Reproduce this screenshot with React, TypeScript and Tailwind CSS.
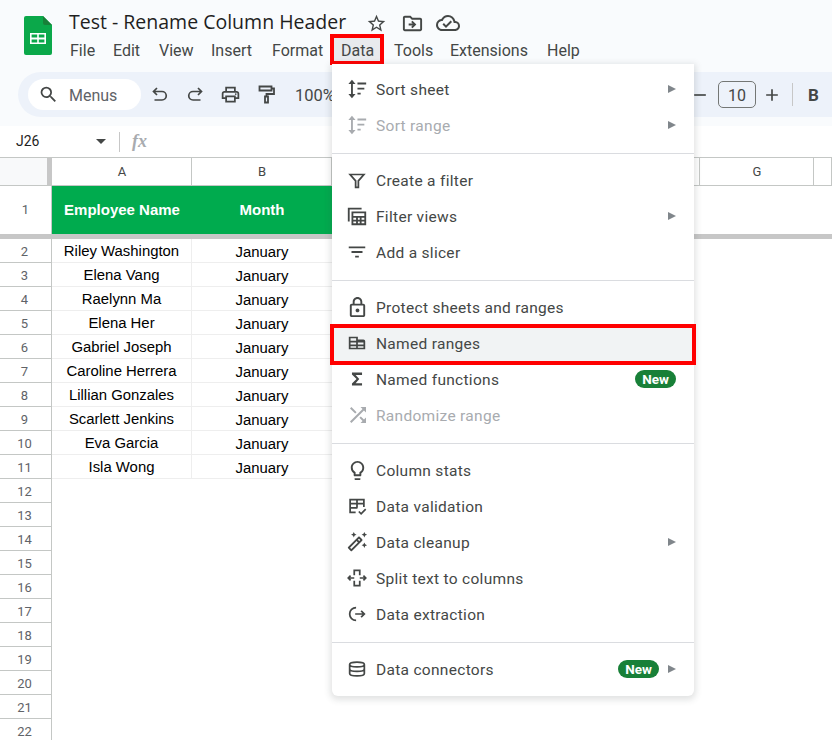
import type { ReactNode } from 'react';
import {
  MdAdd,
  MdOutlineAutoFixHigh,
  MdOutlineCloudDone,
  MdOutlineDriveFileMove,
  MdOutlineLightbulb,
  MdOutlineLocalPrintshop,
  MdOutlineLock,
  MdRemove,
  MdSearch,
  MdShuffle,
  MdStarBorder,
} from 'react-icons/md';

const names = [
  'Riley Washington',
  'Elena Vang',
  'Raelynn Ma',
  'Elena Her',
  'Gabriel Joseph',
  'Caroline Herrera',
  'Lillian Gonzales',
  'Scarlett Jenkins',
  'Eva Garcia',
  'Isla Wong',
];

const menuBar = [
  { label: 'File', cls: 'w-[43px]' },
  { label: 'Edit', cls: 'w-[46px]' },
  { label: 'View', cls: 'w-[52px]' },
  { label: 'Insert', cls: 'w-[61px]' },
  { label: 'Format', cls: 'w-[69px]' },
  { label: 'Data', cls: 'w-[53px]' },
  { label: 'Tools', cls: 'w-[56px]' },
  { label: 'Extensions', cls: 'w-[97px]' },
  { label: 'Help', cls: 'w-[40px]' },
];

function Svg({ children }: { children: ReactNode }) {
  return (
    <svg viewBox="0 0 24 24" className="h-[22px] w-[22px]" fill="currentColor">
      {children}
    </svg>
  );
}

function Line({ children }: { children: ReactNode }) {
  return (
    <svg viewBox="0 0 24 24" className="h-[22px] w-[22px]" fill="none" stroke="currentColor" strokeWidth="1.9">
      {children}
    </svg>
  );
}

const SortIcon = () => (
  <Svg>
    <path d="M6.500 2 2.600 6.600h2.900v10.800H2.600L6.500 22l3.900-4.600H7.500V6.600h2.900z" />
    <path d="M12.500 5h9.500v2h-9.500zM12.500 10.500h7.500v2h-7.500zM12.500 16h3.500v2h-3.500z" />
  </Svg>
);
const FilterIcon = () => (
  <Line>
    <path d="M4.500 6h15l-6 7v7h-3v-7z" />
  </Line>
);
const FilterViewsIcon = () => (
  <Svg>
    <path d="M2 3h15v2H4v13H2z" />
    <path d="M6 7h16v15H6zm2 2v3h12V9zm0 5v2h3v-2zm5 0v2h2v-2zm4 0v2h3v-2zm-9 4v2h3v-2zm5 0v2h2v-2zm4 0v2h3v-2z" fillRule="evenodd" />
  </Svg>
);
const SlicerIcon = () => (
  <Svg>
    <path d="M3 6h18v2H3zM6 11h12v2H6zM10 16h4v2h-4z" />
  </Svg>
);
const NamedRangesIcon = () => (
  <Line>
    <path d="M4 6h8v3h7a1 1 0 0 1 1 1v8H4zM4 10.500h16M4 14.500h16M12 6v12" />
  </Line>
);
const SigmaIcon = () => (
  <Svg>
    <path d="M6.500 5h11v2.500h-7l4 4.500-4 4.500h7V19h-11v-2l5-5-5-5z" />
  </Svg>
);
const ValidationIcon = () => (
  <Line>
    <path d="M10.500 19H4.500V5h15v8M4.500 9.500h15M12 5v9M4.500 14h8" />
    <path d="m14 18 2.500 2.500 5-5" />
  </Line>
);
const SplitIcon = () => (
  <Line>
    <path d="M9 9V3.800h6V9M9 15v5.200h6V15M9 12H2.500M5 9.500 2.500 12 5 14.500M15 12h6.500M19 9.500l2.500 2.500-2.500 2.500" />
  </Line>
);
const ExtractIcon = () => (
  <Line>
    <path d="M11 5a7 7 0 0 0 0 14M10 12h10M16.500 8.500 20 12l-3.500 3.500" />
  </Line>
);
const DatabaseIcon = () => (
  <Line>
    <path d="M4 7c0-3.500 16-3.500 16 0v10c0 3.500-16 3.500-16 0zM4 7c0 3.500 16 3.500 16 0M4 12c0 3.500 16 3.500 16 0" />
  </Line>
);

type Item = {
  label: string;
  icon: ReactNode;
  disabled?: boolean;
  arrow?: boolean;
  badge?: boolean;
  hl?: boolean;
};

const groups: Item[][] = [
  [
    { label: 'Sort sheet', icon: <SortIcon />, arrow: true },
    { label: 'Sort range', icon: <SortIcon />, arrow: true, disabled: true },
  ],
  [
    { label: 'Create a filter', icon: <FilterIcon /> },
    { label: 'Filter views', icon: <FilterViewsIcon />, arrow: true },
    { label: 'Add a slicer', icon: <SlicerIcon /> },
  ],
  [
    { label: 'Protect sheets and ranges', icon: <MdOutlineLock size={23} /> },
    { label: 'Named ranges', icon: <NamedRangesIcon />, hl: true },
    { label: 'Named functions', icon: <SigmaIcon />, badge: true },
    { label: 'Randomize range', icon: <MdShuffle size={24} />, disabled: true },
  ],
  [
    { label: 'Column stats', icon: <MdOutlineLightbulb size={23} /> },
    { label: 'Data validation', icon: <ValidationIcon /> },
    { label: 'Data cleanup', icon: <MdOutlineAutoFixHigh size={22} />, arrow: true },
    { label: 'Split text to columns', icon: <SplitIcon /> },
    { label: 'Data extraction', icon: <ExtractIcon /> },
  ],
  [{ label: 'Data connectors', icon: <DatabaseIcon />, arrow: true, badge: true }],
];

function Arrow() {
  return (
    <svg viewBox="0 0 8 8" className="h-2 w-2 text-[#80868b]" fill="currentColor">
      <path d="M0 0l8 4-8 4z" />
    </svg>
  );
}

function MenuRow({ item }: { item: Item }) {
  return (
    <div
      className={`relative flex h-9 items-center pl-[14px] pr-[18px] text-[15.5px] tracking-[0.3px] ${
        item.disabled ? 'text-[#a8abaf]' : 'text-[#444746]'
      } ${item.hl ? 'bg-[#f1f3f4]' : ''}`}
    >
      {item.hl && <div className="absolute -left-[2px] -right-[2px] -top-[1px] -bottom-[4px] border-4 border-[#ff0000]" />}
      <span className="flex w-[30px] items-center">{item.icon}</span>
      <span className="flex-1 pt-[3px]">{item.label}</span>
      {item.badge && (
        <span className="flex h-[18px] w-[41px] items-center justify-center rounded-full bg-[#188038] text-[13.5px] font-bold tracking-normal text-white">
          New
        </span>
      )}
      {item.arrow && (
        <span className="ml-[9px]">
          <Arrow />
        </span>
      )}
    </div>
  );
}

function DataMenu() {
  return (
    <div className="absolute left-[332px] top-[64px] w-[362px] rounded-b-md bg-white pb-[9px] pt-[7px] font-['Roboto',sans-serif] shadow-[0_2px_6px_2px_rgba(60,64,67,0.15)]">
      {groups.map((group, i) => (
        <div key={i}>
          {i > 0 && <div className="mb-2 mt-[10px] h-px bg-[#dadce0]" />}
          {group.map((item) => (
            <MenuRow key={item.label} item={item} />
          ))}
        </div>
      ))}
    </div>
  );
}

function Toolbar() {
  return (
    <div className="ml-[18px] flex h-[45px] items-center rounded-l-[23px] bg-[#edf2fa] pl-[10px] font-['Roboto',sans-serif] text-[#444746]">
      <div className="flex h-[31px] w-[113px] items-center rounded-full bg-white pl-[10px] text-[16px] text-[#5f6368]">
        <MdSearch size={21} className="text-[#444746]" />
        <span className="ml-[10px] pt-[2px]">Menus</span>
      </div>
      <div className="ml-[9px] flex items-center gap-[15px]">
        <svg viewBox="0 0 20 20" className="h-5 w-5" fill="none" stroke="currentColor" strokeWidth="1.7">
          <path d="M7 3 3.500 6.500 7 10M3.500 6.500H12a4 4 0 0 1 0 8.500H4.500" />
        </svg>
        <svg viewBox="0 0 20 20" className="h-5 w-5" fill="none" stroke="currentColor" strokeWidth="1.7">
          <path d="M13 3l3.500 3.500L13 10M16.500 6.500H8a4 4 0 0 0 0 8.500h7.500" />
        </svg>
        <MdOutlineLocalPrintshop size={21} />
        <svg viewBox="0 0 21 21" className="h-[21px] w-[21px]" fill="none" stroke="currentColor" strokeWidth="1.8">
          <path d="M3.500 2.500h12v4h-12zM15.500 4.500h2.500v5.500h-7.500v2.500" />
          <path d="M9 12.500h3v6H9z" />
        </svg>
      </div>
      <span className="ml-[18px] w-[395px] pt-[3px] text-[16.5px]">100%</span>
      <MdRemove size={20} />
      <span className="ml-2 flex h-[27px] w-[38px] items-center justify-center rounded-[5px] border border-[#747775] pt-[2px] text-[16px]">10</span>
      <MdAdd size={20} className="ml-[6px]" />
      <span className="ml-[10px] h-[23px] w-px bg-[#c7c7c7]" />
      <span className="ml-[15px] pt-[2px] text-[17px] font-bold">B</span>
    </div>
  );
}

function Header() {
  return (
    <div className="h-[126px] bg-[#f9fbfd]">
      <div className="flex h-[72px]">
        <svg viewBox="0 0 28 39" className="ml-6 mt-4 h-[39px] w-7">
          <path d="M2 0h17l9 9v28a2 2 0 0 1-2 2H2a2 2 0 0 1-2-2V2a2 2 0 0 1 2-2z" fill="#0ba84a" />
          <path d="M19 0l9 9h-7a2 2 0 0 1-2-2z" fill="#188038" />
          <path fillRule="evenodd" d="M6 17h16v11H6zm1.600 1.600v3h5.600v-3zm7.200 0v3h5.600v-3zm-7.200 4.800v3h5.600v-3zm7.200 0v3h5.600v-3z" fill="#fff" />
        </svg>
        <div className="ml-[17px]">
          <div className="mt-[9px] flex h-[28px] items-center">
            <span className="w-[297px] pb-[2px] font-['Open_Sans',sans-serif] text-[19.5px] leading-6 text-[#1f1f1f]">
              Test - Rename Column Header
            </span>
            <span className="flex items-center text-[#444746]">
              <MdStarBorder size={21} />
              <MdOutlineDriveFileMove size={23} className="ml-[14px]" />
              <MdOutlineCloudDone size={24} className="ml-3" />
            </span>
          </div>
          <div className="ml-px mt-1 flex font-['Roboto',sans-serif] text-[16px] leading-5 text-[#444746]">
            {menuBar.map((m) => (
              <span key={m.label} className={`relative ${m.cls}`}>
                {m.label === 'Data' && (
                  <span className="absolute -left-[11px] -top-[7px] h-[31px] w-[54px] border-4 border-[#ff0000] bg-[#e8eaed]" />
                )}
                <span className="relative">{m.label}</span>
              </span>
            ))}
          </div>
        </div>
      </div>
      <Toolbar />
    </div>
  );
}

function FormulaBar() {
  return (
    <div className="flex h-[32px] items-center border-b border-[#c4c7c5] bg-white pl-4 font-['Roboto',sans-serif] text-[14px] text-[#1f1f1f]">
      <span className="w-[80px]">J26</span>
      <svg viewBox="0 0 10 5" className="h-[5px] w-[10px] text-[#444746]" fill="currentColor">
        <path d="M0 0h10L5 5z" />
      </svg>
      <span className="ml-[13px] h-[20px] w-px bg-[#c7c7c7]" />
      <span className="ml-[12px] font-['Liberation_Serif',serif] text-[18px] font-bold italic text-[#a8abaf]">fx</span>
    </div>
  );
}

function ColumnHeaders() {
  // C to F sit behind the open menu, so they keep no labels
  const cols = [
    { label: 'A', cls: 'w-[140px]' },
    { label: 'B', cls: 'w-[140px]' },
    { label: '', cls: 'w-[368px]' },
    { label: 'G', cls: 'w-[114px]' },
    { label: '', cls: 'flex-1' },
  ];
  return (
    <div className="flex h-[28px] border-b border-[#c4c7c5] font-['Roboto',sans-serif] text-[13px] text-[#444746]">
      <div className="w-[47px] bg-[#f8f9fa]" />
      <div className="w-[5px] bg-[#c7c7c7]" />
      {cols.map((c, i) => (
        <div key={i} className={`flex items-center justify-center border-r border-[#c4c7c5] pl-[1px] pt-[1px] ${c.cls}`}>
          {c.label}
        </div>
      ))}
    </div>
  );
}

function RowNum({ n }: { n: number }) {
  return (
    <div className="flex w-[52px] shrink-0 items-center justify-center border-b border-r border-[#c4c7c5] pr-[2px] pt-[2px] font-['Roboto',sans-serif] text-[13px] text-[#5f6368]">
      {n}
    </div>
  );
}

function Grid() {
  const rest = Array.from({ length: 11 }, (_, i) => i + 12);
  return (
    <div>
      <ColumnHeaders />
      <div className="flex h-[48px]">
        <div className="flex w-[52px] shrink-0 items-center justify-center border-r border-[#c4c7c5] font-['Roboto',sans-serif] text-[13px] text-[#5f6368]">
          1
        </div>
        <div className="flex w-[280px] items-center bg-[#00ab4e] font-['Liberation_Sans',sans-serif] text-[15px] font-bold text-white">
          <span className="w-[140px] text-center">Employee Name</span>
          <span className="w-[140px] text-center">Month</span>
        </div>
      </div>
      <div className="h-[5px] bg-[#c7c7c7]" />
      {names.map((name, i) => (
        <div key={name} className="flex h-6">
          <RowNum n={i + 2} />
          <div className="flex w-[280px] border-b border-[#eeeeee] font-['Liberation_Sans',sans-serif] text-[14.9px] text-black">
            <span className="flex w-[140px] items-center justify-center border-r border-[#eeeeee] pt-[2px]">{name}</span>
            <span className="flex w-[140px] items-center justify-center pt-1">January</span>
          </div>
        </div>
      ))}
      {rest.map((n) => (
        <div key={n} className="flex h-6">
          <RowNum n={n} />
        </div>
      ))}
    </div>
  );
}

export default function App() {
  return (
    <div className="relative h-[740px] w-[832px] overflow-hidden bg-white">
      <Header />
      <FormulaBar />
      <Grid />
      <DataMenu />
    </div>
  );
}
